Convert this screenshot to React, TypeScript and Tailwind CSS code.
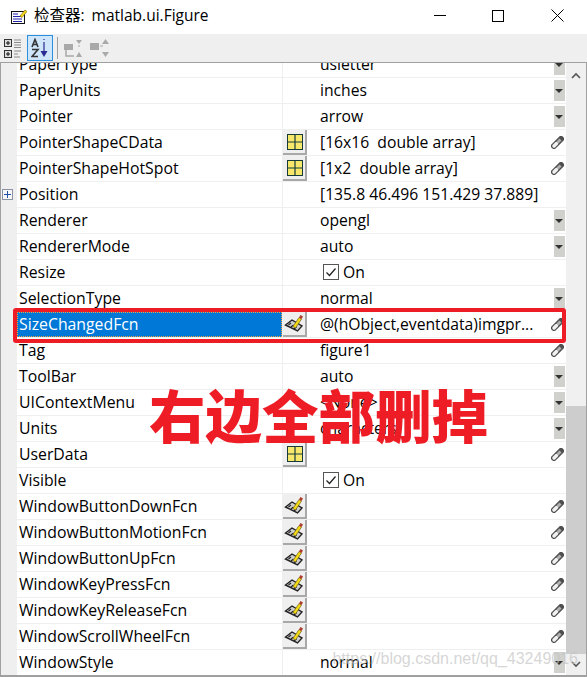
import React from "react";

type Kind = "none" | "drop" | "pen";
type Row = { name: string; value?: string; kind?: Kind; btn?: "grid" | "fcn"; check?: boolean; plus?: boolean; selected?: boolean };

const rows: Row[] = [
  { name: "PaperType", value: "usletter", kind: "drop" },
  { name: "PaperUnits", value: "inches", kind: "drop" },
  { name: "Pointer", value: "arrow", kind: "drop" },
  { name: "PointerShapeCData", value: "[16x16  double array]", kind: "pen", btn: "grid" },
  { name: "PointerShapeHotSpot", value: "[1x2  double array]", kind: "pen", btn: "grid" },
  { name: "Position", value: "[135.8 46.496 151.429 37.889]", plus: true },
  { name: "Renderer", value: "opengl", kind: "drop" },
  { name: "RendererMode", value: "auto", kind: "drop" },
  { name: "Resize", check: true },
  { name: "SelectionType", value: "normal", kind: "drop" },
  { name: "SizeChangedFcn", value: "@(hObject,eventdata)imgpr...", kind: "pen", btn: "fcn", selected: true },
  { name: "Tag", value: "figure1", kind: "pen" },
  { name: "ToolBar", value: "auto", kind: "drop" },
  { name: "UIContextMenu", value: "<None>", kind: "drop" },
  { name: "Units", value: "characters", kind: "drop" },
  { name: "UserData", kind: "pen", btn: "grid" },
  { name: "Visible", check: true },
  { name: "WindowButtonDownFcn", kind: "pen", btn: "fcn" },
  { name: "WindowButtonMotionFcn", kind: "pen", btn: "fcn" },
  { name: "WindowButtonUpFcn", kind: "pen", btn: "fcn" },
  { name: "WindowKeyPressFcn", kind: "pen", btn: "fcn" },
  { name: "WindowKeyReleaseFcn", kind: "pen", btn: "fcn" },
  { name: "WindowScrollWheelFcn", kind: "pen", btn: "fcn" },
  { name: "WindowStyle", value: "normal", kind: "drop" },
];

function Pencil() {
  return (
    <svg width="13" height="13" viewBox="0 0 13 13" className="shrink-0">
      <path d="M3 10 10 3" stroke="#4f4f4f" strokeWidth="6" strokeLinecap="round" />
      <path d="M3 10 5.500 7.500" stroke="#f2f2f2" strokeWidth="3.500" strokeLinecap="round" />
      <path d="M6.500 6.500 9.500 3.500" stroke="#b0b0b0" strokeWidth="3" />
    </svg>
  );
}

function GridIcon() {
  return (
    <svg width="16" height="16" viewBox="0 0 16 16">
      <rect x="0.500" y="0.500" width="15" height="15" fill="#f7e76a" stroke="#163a3a" />
      <path d="M8 1v14M1 8h14" stroke="#163a3a" strokeWidth="1.2" />
    </svg>
  );
}

function FcnIcon() {
  return (
    <svg width="21" height="19" viewBox="0 0 21 19">
      <path d="M1.500 11 8 6l10 6-4.500 5z" fill="#cfcfcf" stroke="#222" strokeWidth="1.4" />
      <path d="M4.500 11 7 9M7 13l2.500-2M10 15l2.500-2" stroke="#222" strokeWidth="1.2" />
      <path d="M9 12.500 15 3.500l2.500 1.500L11.500 14z" fill="#f5dc14" stroke="#6d5f10" strokeWidth="0.7" />
      <path d="M15 3.500 16.500 1 19 2.500 17.500 5z" fill="#b03a2a" />
    </svg>
  );
}

function SideButton({ children }: { children: React.ReactNode }) {
  return (
    <div className="flex h-[25px] w-[24px] shrink-0 items-center justify-center border-r-2 border-b-2 border-[#a8a8a8] bg-[#efefef] pl-px">
      {children}
    </div>
  );
}

function PropertyRow({ row }: { row: Row }) {
  return (
    <div className="flex h-[26px] shrink-0 border-b border-[#efefef]">
      <div className="relative flex w-[17px] shrink-0 items-center justify-center bg-[#efefef] pr-[2px]">
        {row.plus && (
          <div className="flex h-[11px] w-[11px] items-center justify-center border border-[#8a93a6] bg-[#f7f7f7]">
            <svg width="7" height="7" viewBox="0 0 7 7">
              <path d="M3.500 0v7M0 3.500h7" stroke="#1f4fa8" />
            </svg>
          </div>
        )}
      </div>
      <div className={`flex w-[265px] shrink-0 items-center pl-[2px] text-[15.8px] ${row.selected ? "bg-[#0078d7] text-white outline-1 -outline-offset-1 outline-dotted outline-[#f5a33c]" : "text-black"}`}>
        {row.name}
      </div>
      <div className="flex w-[24px] shrink-0 items-start border-l border-[#efefef]">
        {row.btn && <SideButton>{row.btn === "grid" ? <GridIcon /> : <FcnIcon />}</SideButton>}
      </div>
      <div className="flex min-w-0 flex-1 items-center pl-[14px] text-black">
        {row.check ? (
          <div className="flex items-center gap-[4px] pl-[3px]">
            <div className="flex h-[16px] w-[16px] items-center justify-center border border-[#555] bg-white">
              <svg width="12" height="12" viewBox="0 0 12 12">
                <path d="M1.500 6.500 4.500 9.500 10.500 2.500" fill="none" stroke="#222" strokeWidth="1.3" />
              </svg>
            </div>
            <span>On</span>
          </div>
        ) : (
          <span className="whitespace-pre">{row.value}</span>
        )}
      </div>
      <div className={`flex w-[14px] shrink-0 items-center justify-center ${row.kind === "pen" ? "pr-[4px]" : ""}`}>
        {row.kind === "drop" && (
          <div className="flex h-[21px] w-[11px] shrink-0 items-center justify-center bg-[#d0d0cc]">
            <div className="h-0 w-0 border-x-[4px] border-t-[4px] border-x-transparent border-t-[#333]" />
          </div>
        )}
        {row.kind === "pen" && <Pencil />}
      </div>
    </div>
  );
}

export default function App() {
  return (
    <div className="relative flex h-[677px] w-[587px] flex-col overflow-hidden bg-white font-['Open_Sans','Noto_Sans_CJK_SC',sans-serif] text-[15.7px]">
      <header className="flex h-[34px] shrink-0 items-center bg-white pb-[3px] pl-[11px]">
        <svg width="16" height="16" viewBox="0 0 16 16" className="shrink-0">
          <rect x="0.500" y="3.500" width="13" height="12" fill="#fff" stroke="#111" />
          <path d="M2 6h5M2 8.500h8M2 11h9M2 13.500h9" stroke="#2222aa" />
          <path d="M9 8l5-6 2 1.500-5 6z" fill="#f2d81e" stroke="#7a5a10" strokeWidth="0.6" />
        </svg>
        <span className="ml-[7px] text-[15.5px] text-black">检查器:</span>
        <span className="ml-[7px] text-[15.5px] text-black">matlab.ui.Figure</span>
        <div className="ml-auto flex items-center">
          <div className="flex w-[58px] justify-center"><div className="h-px w-[12px] bg-black" /></div>
          <div className="flex w-[58px] justify-center"><div className="h-[12px] w-[12px] border border-black" /></div>
          <div className="flex w-[60px] justify-center">
            <svg width="13" height="13" viewBox="0 0 13 13"><path d="M.5.5l12 12M12.500.5l-12 12" stroke="#000" /></svg>
          </div>
        </div>
      </header>

      <div className="flex h-[29px] shrink-0 items-center gap-[1px] border-b border-[#a0a0a0] bg-[#efefef] pl-[3px]">
        <svg width="20" height="22" viewBox="0 0 20 22" className="mr-[3px]">
          <rect x="1.500" y="2.500" width="7" height="7" fill="#ddd" stroke="#333" />
          <path d="M3 6h4M5 4v4" stroke="#111" />
          <rect x="1.500" y="13.500" width="7" height="7" fill="#ddd" stroke="#333" />
          <path d="M3 17h4M5 15v4" stroke="#111" />
          <path d="M11 3h7M11 5.500h7M11 8h7M11 10.500h7M11 14h7M11 17h4M11 20h6" stroke="#8a8a8a" />
        </svg>
        <div className="flex h-[26px] w-[26px] items-center justify-center border border-[#2b8fe0] bg-[#cfe5fa]">
          <svg width="18" height="20" viewBox="0 0 18 20">
            <path d="M1 9 4 1.500 7 9M2 6.500h4" fill="none" stroke="#333" strokeWidth="1.6" />
            <path d="M1 11.500h6L1 18.500h6" fill="none" stroke="#333" strokeWidth="1.6" />
            <path d="M13 1v1M13 4v10" stroke="#2a2a90" strokeWidth="1.2" />
            <path d="M9.500 13h7L13 19z" fill="#2a2a90" />
          </svg>
        </div>
        <div className="mx-[3px] h-[22px] w-px bg-[#a0a0a0]" />
        <svg width="26" height="22" viewBox="0 0 26 22">
          <rect x="2" y="7" width="9" height="6" fill="#a9a9a9" />
          <path d="M4 13v6h8" fill="none" stroke="#a9a9a9" strokeWidth="1.5" />
          <path d="M14 3h6l-3 4zM14 20h6l-3-5z" fill="#a9a9a9" />
          <path d="M16 9h2" stroke="#a9a9a9" />
        </svg>
        <svg width="26" height="22" viewBox="0 0 26 22">
          <rect x="1" y="6" width="9" height="7" fill="#a9a9a9" />
          <path d="M11 9h3" stroke="#a9a9a9" />
          <path d="M13 7h7l-3.500-5zM13 15h7l-3.500 5z" fill="#a9a9a9" />
        </svg>
      </div>

      <div className="flex min-h-0 flex-1 border-b-2 border-l border-r border-[#a0a0a0]">
        <div className="min-w-0 flex-1 overflow-hidden">
          <div className="-ml-px -mt-[11px] flex flex-col">
            {rows.map((row) => (
              <PropertyRow key={row.name} row={row} />
            ))}
          </div>
        </div>
        <div className="flex w-[20px] shrink-0 flex-col items-center bg-[#f0f0f0]">
          <div className="flex h-[20px] items-center justify-center pt-[5px]">
            <svg width="10" height="7" viewBox="0 0 10 7"><path d="M1 6 5 2l4 4" fill="none" stroke="#555" strokeWidth="1.6" /></svg>
          </div>
          <div className="mt-[323px] h-[248px] w-full bg-[#cdcdcd]" />
          <div className="flex flex-1 items-center justify-center">
            <svg width="10" height="7" viewBox="0 0 10 7"><path d="M1 1l4 4 4-4" fill="none" stroke="#555" strokeWidth="1.6" /></svg>
          </div>
        </div>
      </div>

      {/* annotation over the screenshot */}
      <div className="absolute left-[13px] top-[308px] h-[35px] w-[553px] rounded-[3px] border-4 border-[#ee1c25]" />
      <div className="absolute left-[149px] top-[378px] whitespace-nowrap font-['Noto_Sans_CJK_SC',sans-serif] text-[56.5px] font-black leading-[70px] text-[#ee1c25]">
        右边全部删掉
      </div>
      <div className="absolute right-[9px] top-[647px] whitespace-nowrap font-['Liberation_Sans',sans-serif] text-[16px] text-[#c4c4c4]/70">
        https://blog.csdn.net/qq_43249016
      </div>
    </div>
  );
}
